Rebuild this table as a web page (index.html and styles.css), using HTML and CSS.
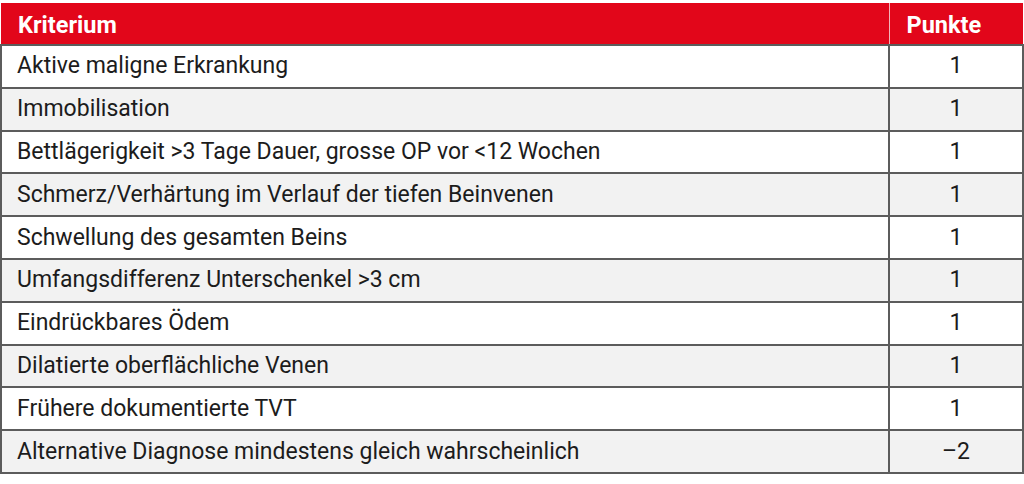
FILE: index.html
```html
<!DOCTYPE html>
<html lang="de">
<head>
<meta charset="utf-8">
<link rel="stylesheet" href="styles.css">
</head>
<body>
<table class="score">
  <thead>
    <tr><th class="crit">Kriterium</th><th class="pts">Punkte</th></tr>
  </thead>
  <tbody>
    <tr><td class="crit">Aktive maligne Erkrankung</td><td class="pts">1</td></tr>
    <tr><td class="crit">Immobilisation</td><td class="pts">1</td></tr>
    <tr><td class="crit">Bettlägerigkeit &gt;3 Tage Dauer, grosse OP vor &lt;12 Wochen</td><td class="pts">1</td></tr>
    <tr><td class="crit">Schmerz/Verhärtung im Verlauf der tiefen Beinvenen</td><td class="pts">1</td></tr>
    <tr><td class="crit">Schwellung des gesamten Beins</td><td class="pts">1</td></tr>
    <tr><td class="crit">Umfangsdifferenz Unterschenkel &gt;3 cm</td><td class="pts">1</td></tr>
    <tr><td class="crit">Eindrückbares Ödem</td><td class="pts">1</td></tr>
    <tr><td class="crit">Dilatierte oberflächliche Venen</td><td class="pts">1</td></tr>
    <tr><td class="crit">Frühere dokumentierte TVT</td><td class="pts">1</td></tr>
    <tr><td class="crit">Alternative Diagnose mindestens gleich wahrscheinlich</td><td class="pts">–2</td></tr>
  </tbody>
</table>
</body>
</html>
```
FILE: styles.css
```css
html, body {
  margin: 0;
  padding: 0;
  background: #ffffff;
}
body {
  padding-top: 3px;
  font-family: Roboto, "Liberation Sans", sans-serif;
  color: #1c1c1c;
}
.score {
  width: 1024px;
  border-collapse: collapse;
  table-layout: fixed;
}
.score th {
  background: #e2061a;
  color: #ffffff;
  font-weight: 700;
  font-size: 23.5px;
  height: 42px;
  padding: 3px 0 0 17px;
  text-align: left;
  border: none;
  box-sizing: border-box;
}
.score th.crit {
  width: 888px;
}
.score th.pts {
  border-left: 1px solid #f3b3b8;
}
.score td {
  font-size: 23px;
  height: 42.8px;
  padding: 0 0 1px 0;
  border: 2px solid #5c5c5c;
  box-sizing: border-box;
}
.score tbody tr:nth-child(even) td {
  background: #f2f2f2;
}
.score td.crit {
  padding-left: 15px;
}
.score td.pts {
  text-align: center;
}
```
